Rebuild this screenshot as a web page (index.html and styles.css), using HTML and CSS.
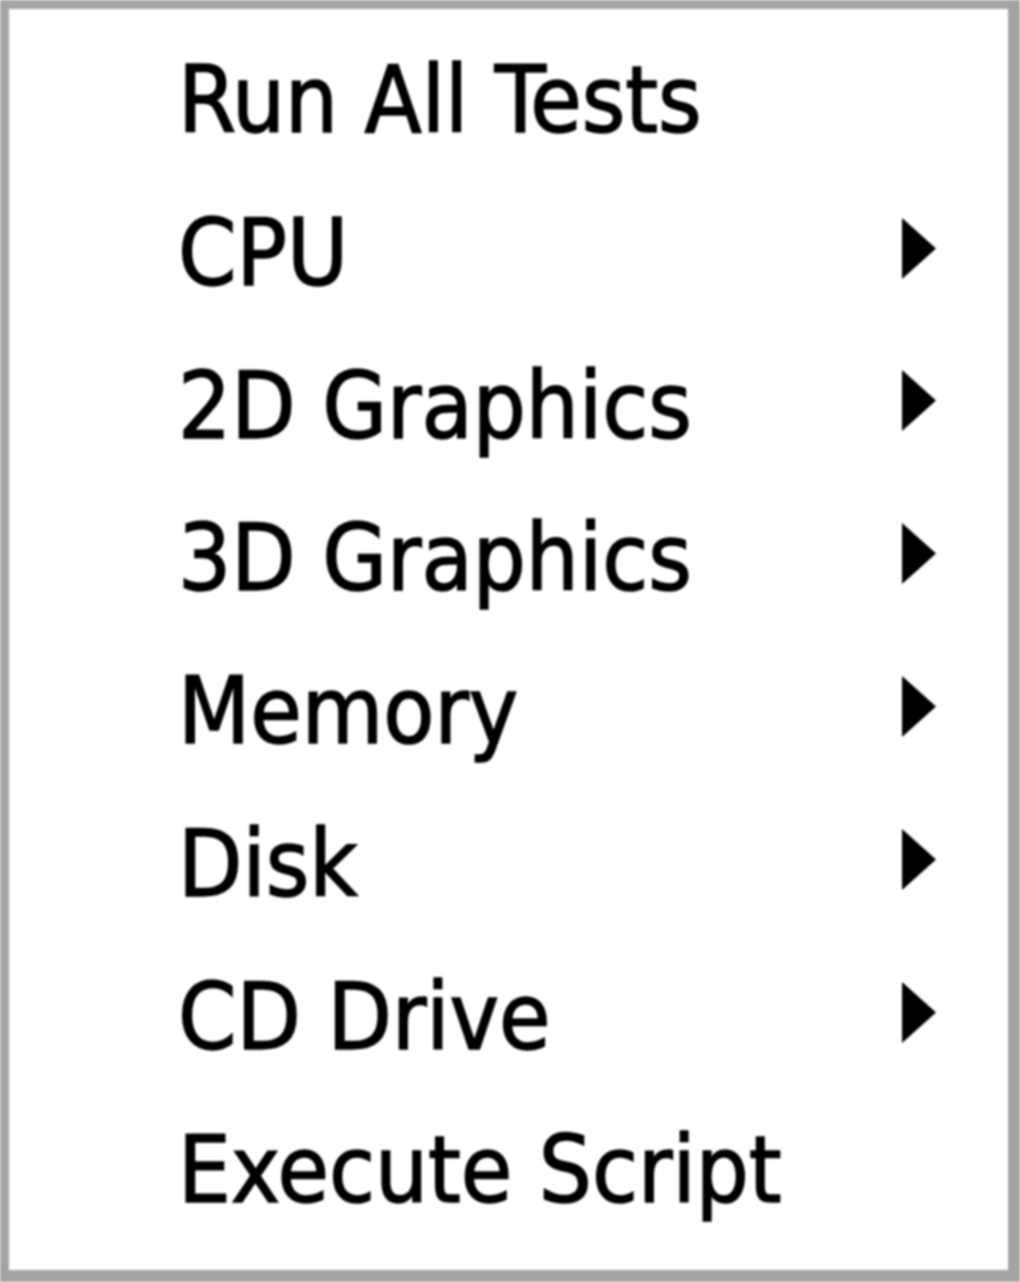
FILE: index.html
```html
<!DOCTYPE html>
<html>
<head>
<meta charset="utf-8">
<link rel="stylesheet" href="styles.css">
</head>
<body>
<div class="menu">
  <div class="item"><span class="label">Run All Tests</span></div>
  <div class="item"><span class="label">CPU</span><svg class="arrow" viewBox="0 0 38 65"><polygon points="2,2 36,32.5 2,63"/></svg></div>
  <div class="item"><span class="label">2D Graphics</span><svg class="arrow" viewBox="0 0 38 65"><polygon points="2,2 36,32.5 2,63"/></svg></div>
  <div class="item"><span class="label">3D Graphics</span><svg class="arrow" viewBox="0 0 38 65"><polygon points="2,2 36,32.5 2,63"/></svg></div>
  <div class="item"><span class="label">Memory</span><svg class="arrow" viewBox="0 0 38 65"><polygon points="2,2 36,32.5 2,63"/></svg></div>
  <div class="item"><span class="label">Disk</span><svg class="arrow" viewBox="0 0 38 65"><polygon points="2,2 36,32.5 2,63"/></svg></div>
  <div class="item"><span class="label">CD Drive</span><svg class="arrow" viewBox="0 0 38 65"><polygon points="2,2 36,32.5 2,63"/></svg></div>
  <div class="item"><span class="label">Execute Script</span></div>
</div>
</body>
</html>
```
FILE: styles.css
```css
html, body {
  margin: 0;
  padding: 0;
  background: #ffffff;
}
.menu {
  box-sizing: border-box;
  width: 1020px;
  height: 1282px;
  background: #ffffff;
  border-style: solid;
  border-color: #a4a4a4;
  border-width: 9px 12px 12px 9px;
  padding: 15px 70px 0 169px;
  display: flex;
  flex-direction: column;
  filter: blur(1px);
}
.item {
  height: 152.8px;
  display: flex;
  align-items: center;
  justify-content: space-between;
}
.label {
  font-family: "DejaVu Sans Condensed", "DejaVu Sans", sans-serif;
  font-stretch: condensed;
  font-size: 93px;
  line-height: 152.8px;
  color: #000000;
  -webkit-text-stroke: 1.5px #000000;
  white-space: nowrap;
}
.arrow {
  width: 38px;
  height: 65px;
  fill: #000000;
  margin-top: -10px;
}
```
